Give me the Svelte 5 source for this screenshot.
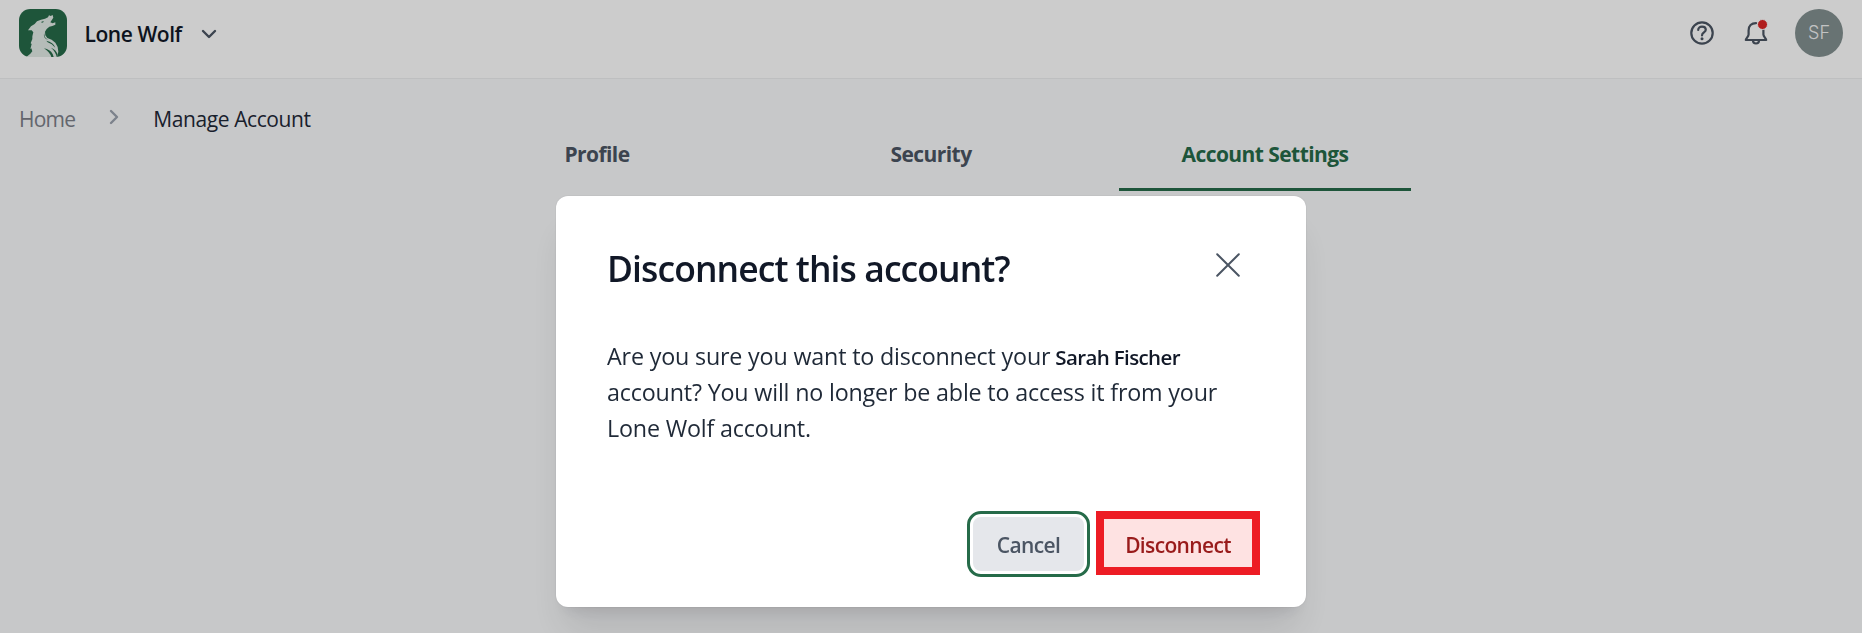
<script lang="ts">
    const tabs: string[] = ['Profile', 'Security', 'Account Settings'];
    let activeTab = 'Account Settings';
    let isModalOpen = true;

    function closeModal(): void {
        isModalOpen = false;
    }
</script>

<main>
    <header>
        <div class="brand">
            <svg class="logo" viewBox="0 0 144 144" aria-label="Logo">
                <rect width="144" height="144" rx="34" fill="#266b49" />
                <path fill="#e3ebe7" d="M27 64 L36 52 L47 45 L54 37 L66 32 L78 29 L87 25 L90 19 L95 21 L101 18 L103 26 L98 34 L94 40 L101 43 L109 40 L109 47 L100 51 L91 53 L83 60 L78 68 L79 79 L85 87 L98 92 L109 101 L116 114 L118 128 L114 144 L22 144 L34 134 L40 127 L37 118 L34 120 L38 105 L35 103 L40 90 L40 82 L43 70 L38 64 Z" />
                <g fill="#266b49">
                    <path d="M66 39 L74 36 L73 40 L69 41 Z" />
                    <path d="M76 70 Q73 84 87 93 Q79 90 76 85 Q73 79 76 70 Z" />
                    <path d="M82 95 Q103 99 109 116 Q99 104 86 100 Z" />
                    <path d="M75 118 Q93 121 101 135 L104 144 L97 144 Q92 129 75 118 Z" />
                    <path d="M96 116 Q112 122 116 138 L113 144 Q110 128 96 116 Z" />
                </g>
            </svg>
            <span class="brand-name">Lone Wolf</span>
            <svg class="chevron-down" viewBox="0 0 16 10">
                <path d="M2 2l6 6 6-6" />
            </svg>
        </div>
        <div class="actions">
            <svg class="icon" viewBox="0 0 24 24">
                <circle cx="12" cy="12" r="10.7" />
                <path d="M8.2 9c0-2.2 1.7-3.4 3.8-3.4s3.8 1.2 3.8 3.2c0 2.6-3.8 2.8-3.8 5.6" />
                <circle class="dot" cx="12" cy="17.8" r="1.5" />
            </svg>
            <div class="bell">
                <svg class="icon" viewBox="0 0 24 24">
                    <path d="M12 2.2C7.4 2.2 4.6 5 4.6 9.4v4.2c0 2-2.8 4.2-2.8 5.4h20.4c0-1.2-2.8-3.4-2.8-5.4V9" />
                    <path d="M9 19.5c0 2 1.2 3 3 3s3-1 3-3" />
                </svg>
                <span class="badge"></span>
            </div>
            <div class="avatar">SF</div>
        </div>
    </header>

    <nav class="breadcrumbs">
        <a class="home" href="/">Home</a>
        <svg class="chevron-right" viewBox="0 0 10 16">
            <path d="M2 2l6 6-6 6" />
        </svg>
        <span class="current">Manage Account</span>
    </nav>

    <div class="tabs">
        {#each tabs as tab}
            <button class="tab" class:active={tab === activeTab} on:click={() => (activeTab = tab)}>{tab}</button>
        {/each}
    </div>
</main>

{#if isModalOpen}
    <div class="overlay">
        <div class="modal" role="dialog" aria-modal="true">
            <div class="modal-header">
                <h1>Disconnect this account?</h1>
                <button class="close-btn" aria-label="Close" on:click={closeModal}>
                    <svg viewBox="0 0 24 24"><path d="M1.2 1.2l21.6 21.6M22.8 1.2L1.2 22.8" /></svg>
                </button>
            </div>
            <p>
                Are you sure you want to disconnect your <strong>Sarah Fischer</strong><br />
                account? You will no longer be able to access it from your<br />
                Lone Wolf account.
            </p>
            <div class="modal-footer">
                <button class="cancel" on:click={closeModal}>Cancel</button>
                <button class="disconnect" on:click={closeModal}>Disconnect</button>
            </div>
        </div>
    </div>
{/if}

<style>
    :global(body) {
        background: #f9fafc;
        font-family: 'Segoe UI', 'Open Sans', 'Noto Sans', sans-serif;
        overflow: hidden;
    }

    main {
        height: 633px;
        color: #1f2937;
    }

    button {
        font: inherit;
        border: none;
        padding: 0;
        background: none;
        cursor: pointer;
    }

    svg {
        display: block;
        fill: none;
        stroke-linecap: round;
        stroke-linejoin: round;
    }

    header {
        box-sizing: border-box;
        height: 79px;
        padding: 9px 19px 0;
        display: flex;
        justify-content: space-between;
        align-items: flex-start;
        background: white;
        border-bottom: 1px solid #eeeff0;
    }

    .brand, .actions {
        display: flex;
        align-items: center;
        height: 48px;
    }

    .logo {
        width: 48px;
        height: 48px;
    }

    .brand-name {
        margin-left: 17.5px;
        padding-top: 1px;
        font-size: 21px;
        font-weight: 600;
        letter-spacing: -0.45px;
        color: #111827;
    }

    .chevron-down {
        width: 16px;
        height: 10px;
        margin-left: 19px;
        margin-top: 1px;
        stroke: #4b5563;
        stroke-width: 2.4;
    }

    .icon {
        width: 24px;
        height: 24px;
        stroke: #4b5563;
        stroke-width: 2.2;
    }

    .dot {
        fill: #4b5563;
        stroke: none;
    }

    .bell {
        position: relative;
        margin-left: 30px;
    }

    .badge {
        position: absolute;
        top: -2px;
        right: 0.5px;
        width: 9px;
        height: 9px;
        border: 1px solid white;
        border-radius: 50%;
        background: #dc2626;
    }

    .avatar {
        width: 48px;
        height: 48px;
        margin-left: 27px;
        border-radius: 50%;
        background: #839090;
        color: #f3f4f4;
        font-family: Inter, sans-serif;
        font-size: 18px;
        font-weight: 300;
        line-height: 48px;
        text-align: center;
    }

    .breadcrumbs {
        display: flex;
        align-items: center;
        height: 28px;
        padding: 26px 19px 0;
        font-size: 21px;
        letter-spacing: -0.42px;
    }

    .home {
        color: #7c8089;
        letter-spacing: -0.75px;
        text-decoration: none;
    }

    .chevron-right {
        width: 10px;
        height: 16px;
        margin: -4px 34px 0;
        stroke: #9ca3af;
        stroke-width: 2.4;
    }

    .tabs {
        display: grid;
        grid-template-columns: repeat(3, 292px);
        gap: 42px;
        width: 960px;
        margin: 7px auto 0;
    }

    .tab {
        box-sizing: border-box;
        height: 51px;
        padding-bottom: 20px;
        border-bottom: 3px solid transparent;
        font-size: 21px;
        font-weight: 700;
        letter-spacing: -0.57px;
        color: #4b5563;
    }

    .tab.active {
        color: #266b49;
        border-color: #266b49;
    }

    .overlay {
        position: fixed;
        inset: 0;
        display: flex;
        justify-content: center;
        align-items: flex-start;
        background: rgba(0, 0, 0, 0.2);
    }

    .modal {
        box-sizing: border-box;
        width: 750px;
        height: 411px;
        margin-top: 196px;
        padding: 50px 46px 30px 51px;
        border-radius: 12px;
        background: white;
        box-shadow: 0 30px 38px -7px rgba(0, 0, 0, 0.1), 0 12px 15px -9px rgba(0, 0, 0, 0.1), 0 0 2px rgba(0, 0, 0, 0.12);
        color: #1f2937;
    }

    .modal-header {
        display: flex;
        justify-content: space-between;
        align-items: flex-start;
    }

    h1 {
        margin: 0;
        font-size: 35.5px;
        font-weight: 600;
        line-height: 44px;
        letter-spacing: -0.92px;
        color: #111827;
    }

    .close-btn {
        margin: 7px 20px 0 0;
    }

    .close-btn svg {
        width: 24px;
        height: 24px;
        stroke: #4b5563;
        stroke-width: 2;
    }

    p {
        margin: 48px 0 0;
        font-size: 23.3px;
        line-height: 36px;
        letter-spacing: -0.18px;
        white-space: nowrap;
    }

    strong {
        margin-left: -1px;
        font-size: 20.5px;
        font-weight: 600;
        line-height: 1;
        letter-spacing: -0.62px;
        color: #111827;
    }

    .modal-footer {
        display: flex;
        justify-content: flex-end;
        align-items: flex-start;
        gap: 6px;
        margin-top: 65px;
    }

    .cancel {
        width: 111px;
        height: 54px;
        margin: 6px 0;
        border-radius: 8px;
        background: #e5e7eb;
        outline: 3px solid #266b49;
        outline-offset: 3px;
        color: #4b5563;
    }

    .disconnect {
        box-sizing: border-box;
        width: 164px;
        height: 64px;
        margin-left: 6px;
        border: 8px solid #ed1c24;
        background: #fee2e2;
        color: #991b1b;
    }

    .cancel, .disconnect {
        box-sizing: border-box;
        font-size: 21px;
        font-weight: 600;
        letter-spacing: -0.65px;
    }

    .cancel {
        padding-top: 1px;
    }

    .disconnect {
        padding-top: 4px;
    }
</style>
